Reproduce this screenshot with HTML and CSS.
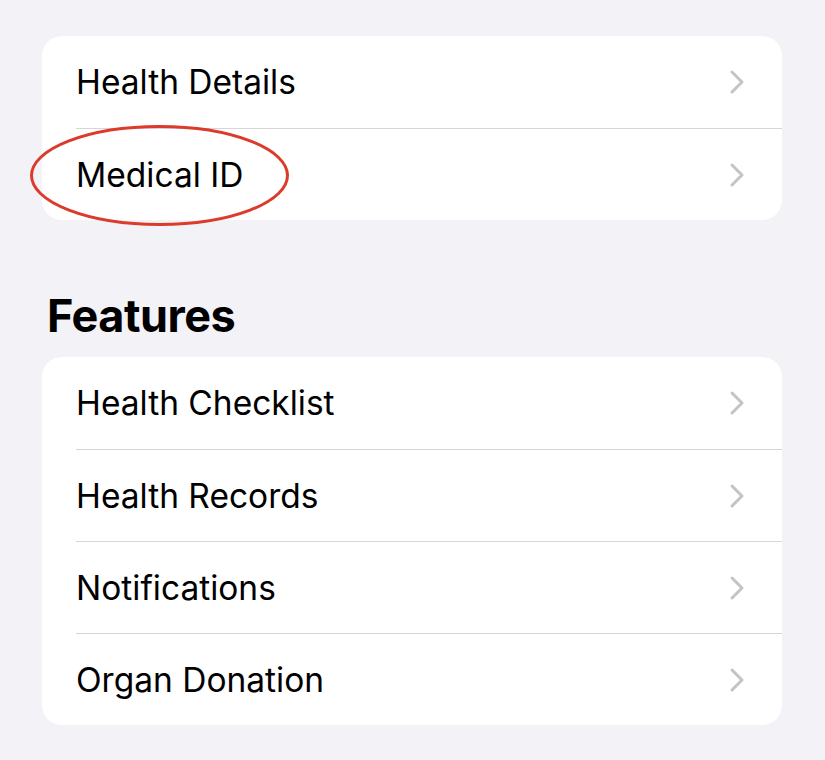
FILE: index.html
```
<!DOCTYPE html>
<html lang="en">
<head>
  <meta charset="UTF-8" />
  <meta name="viewport" content="width=device-width, initial-scale=1.0"/>
  <title>Health Profile</title>
  <link rel="stylesheet" href="styles.css">
</head>
<body>

  <div class="page">

    <!-- Profile group -->
    <div class="card">
      <div class="row">
        <span class="row-label">Health Details</span>
        <svg class="chevron" viewBox="0 0 16 26"><polyline points="3,3 13,13 3,23" /></svg>
      </div>
      <div class="row">
        <span class="row-label">Medical ID</span>
        <svg class="chevron" viewBox="0 0 16 26"><polyline points="3,3 13,13 3,23" /></svg>
      </div>

      <!-- hand-drawn highlight -->
      <svg class="circle-mark" viewBox="0 0 261 103">
        <ellipse cx="130.5" cy="51.5" rx="128" ry="49" />
      </svg>
    </div>

    <h2 class="section-title">Features</h2>

    <div class="card">
      <div class="row">
        <span class="row-label">Health Checklist</span>
        <svg class="chevron" viewBox="0 0 16 26"><polyline points="3,3 13,13 3,23" /></svg>
      </div>
      <div class="row">
        <span class="row-label">Health Records</span>
        <svg class="chevron" viewBox="0 0 16 26"><polyline points="3,3 13,13 3,23" /></svg>
      </div>
      <div class="row">
        <span class="row-label">Notifications</span>
        <svg class="chevron" viewBox="0 0 16 26"><polyline points="3,3 13,13 3,23" /></svg>
      </div>
      <div class="row">
        <span class="row-label">Organ Donation</span>
        <svg class="chevron" viewBox="0 0 16 26"><polyline points="3,3 13,13 3,23" /></svg>
      </div>
    </div>

  </div>

</body>
</html>
```

FILE: styles.css
```
* {
  box-sizing: border-box;
}

html, body {
  margin: 0;
  padding: 0;
  background-color: #f2f2f7;
  font-family: Inter, "Noto Sans", sans-serif;
  color: #000;
}

.page {
  padding: 36px 43px 0 42px;
}

/* Grouped list card */
.card {
  position: relative;
  background: #fff;
  border-radius: 20px;
}

.row {
  display: flex;
  align-items: center;
  justify-content: space-between;
  height: 92px;
  margin-left: 34px;
  padding-right: 37px;
  border-top: 1px solid #d6d6da;
}

.row:first-child {
  border-top: none;
}

.row-label {
  font-size: 33.5px;
}

.chevron {
  width: 16px;
  height: 26px;
  fill: none;
  stroke: #c4c4c7;
  stroke-width: 3;
  stroke-linecap: round;
  stroke-linejoin: round;
}

.section-title {
  margin: 0;
  padding: 74px 0 20px 5px;
  font-size: 45px;
  font-weight: 700;
  line-height: 43px;
  letter-spacing: -0.5px;
}

/* red marker around Medical ID */
.circle-mark {
  position: absolute;
  left: -13px;
  top: 88px;
  width: 261px;
  height: 103px;
  fill: none;
  stroke: #dc3b2c;
  stroke-width: 3;
}
```
